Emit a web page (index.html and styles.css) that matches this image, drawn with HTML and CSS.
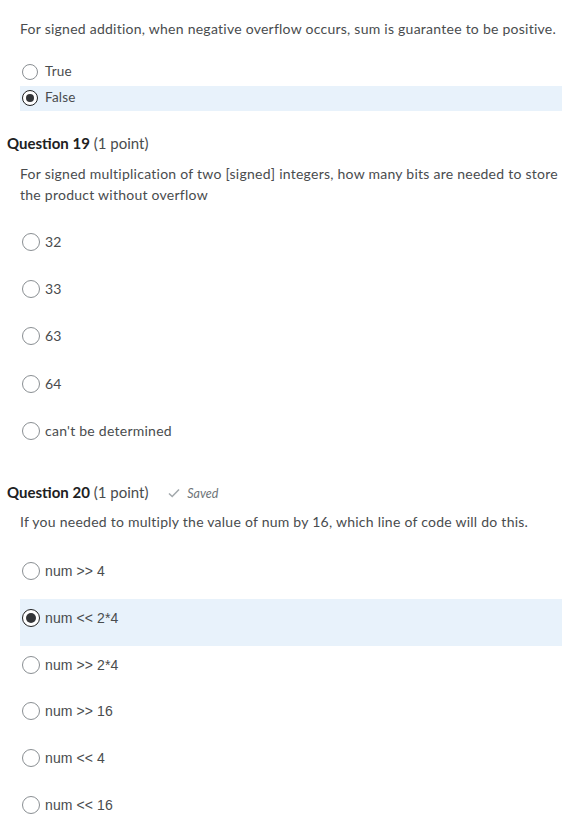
FILE: index.html
```html
<!DOCTYPE html>
<html lang="en">
<head>
    <meta charset="UTF-8">
    <meta name="viewport" content="width=device-width, initial-scale=1.0">
    <title>Quiz</title>
    <link rel="stylesheet" href="styles.css">
</head>
<body>
    <section class="question first">
        <div class="q-body">
            <p class="q-text">For signed addition, when negative overflow occurs, sum is guarantee to be positive.</p>
            <ul class="options compact">
                <li class="option"><span class="radio"></span>True</li>
                <li class="option selected"><span class="radio checked"></span>False</li>
            </ul>
        </div>
    </section>

    <section class="question">
        <h2 class="q-title"><strong>Question 19</strong> (1 point)</h2>
        <div class="q-body">
            <p class="q-text">For signed multiplication of two [signed] integers, how many bits are needed to store the product without overflow</p>
            <ul class="options tall">
                <li class="option"><span class="radio"></span>32</li>
                <li class="option"><span class="radio"></span>33</li>
                <li class="option"><span class="radio"></span>63</li>
                <li class="option"><span class="radio"></span>64</li>
                <li class="option"><span class="radio"></span>can't be determined</li>
            </ul>
        </div>
    </section>

    <section class="question last">
        <h2 class="q-title"><strong>Question 20</strong> (1 point)
            <span class="saved">
                <svg width="12" height="10" viewBox="0 0 12 10"><path d="M1 5.5 L4.2 8.5 L11 1.5" fill="none" stroke="#a3a9ad" stroke-width="1.6"/></svg>
                Saved
            </span>
        </h2>
        <div class="q-body">
            <p class="q-text">If you needed to multiply the value of num by 16, which line of code will do this.</p>
            <ul class="options tall code">
                <li class="option"><span class="radio"></span>num &gt;&gt; 4</li>
                <li class="option selected"><span class="radio checked"></span>num &lt;&lt; 2*4</li>
                <li class="option"><span class="radio"></span>num &gt;&gt; 2*4</li>
                <li class="option"><span class="radio"></span>num &gt;&gt; 16</li>
                <li class="option"><span class="radio"></span>num &lt;&lt; 4</li>
                <li class="option"><span class="radio"></span>num &lt;&lt; 16</li>
            </ul>
        </div>
    </section>
</body>
</html>
```

FILE: styles.css
```css
*{
    margin: 0;
    padding: 0;
    box-sizing: border-box;
}
body{
    font-family: Lato, "Open Sans", sans-serif;
    color: #494c4e;
    background-color: #ffffff;
    padding: 0 25px 0 7px;
}
.question{
    margin-top: 22px;
}
.question.first{
    margin-top: 18px;
}
.question.last{
    margin-top: 23px;
}
.q-title{
    font-size: 15px;
    line-height: 21px;
    font-weight: normal;
    color: #494c4e;
}
.q-title strong{
    color: #202122;
    font-weight: bold;
}
.saved{
    margin-left: 16px;
    font-size: 12.5px;
    font-style: italic;
    color: #6e7477;
}
.saved svg{
    margin-right: 4px;
}
.q-body{
    padding-left: 13px;
}
.q-text{
    font-size: 14px;
    letter-spacing: 0.25px;
    line-height: 21px;
    margin-top: 9px;
}
.last .q-text{
    margin-top: 7px;
}
.first .q-text{
    margin-top: 0;
}
.options{
    list-style: none;
}
.option{
    display: flex;
    align-items: flex-start;
    padding-left: 2px;
}
.option.selected{
    background-color: #e8f2fb;
}
.compact{
    margin-top: 21px;
}
.compact .option{
    height: 26px;
    padding-top: 3px;
    font-size: 13.5px;
    line-height: 17px;
    letter-spacing: 0.2px;
}
.compact .option.selected{
    height: 25px;
}
.compact .radio{
    width: 16px;
    height: 16px;
    margin-top: 1px;
    margin-right: 7px;
}
.tall{
    margin-top: 18px;
}
.last .tall{
    margin-top: 20px;
}
.tall .option{
    height: 47.2px;
    padding-top: 10px;
    font-size: 14px;
    line-height: 18px;
    letter-spacing: 0.25px;
}
.code .option{
    height: 46.8px;
    font-family: "Liberation Sans", Arial, sans-serif;
    letter-spacing: 0.1px;
}
.radio{
    width: 18px;
    height: 18px;
    border: 1px solid #8a8f93;
    border-radius: 50%;
    background-color: #ffffff;
    margin-right: 5px;
    flex-shrink: 0;
    position: relative;
}
.radio.checked{
    border: 1.5px solid #202122;
}
.radio.checked::after{
    content: "";
    position: absolute;
    left: 3px;
    top: 3px;
    right: 3px;
    bottom: 3px;
    border-radius: 50%;
    background-color: #333538;
}
```
